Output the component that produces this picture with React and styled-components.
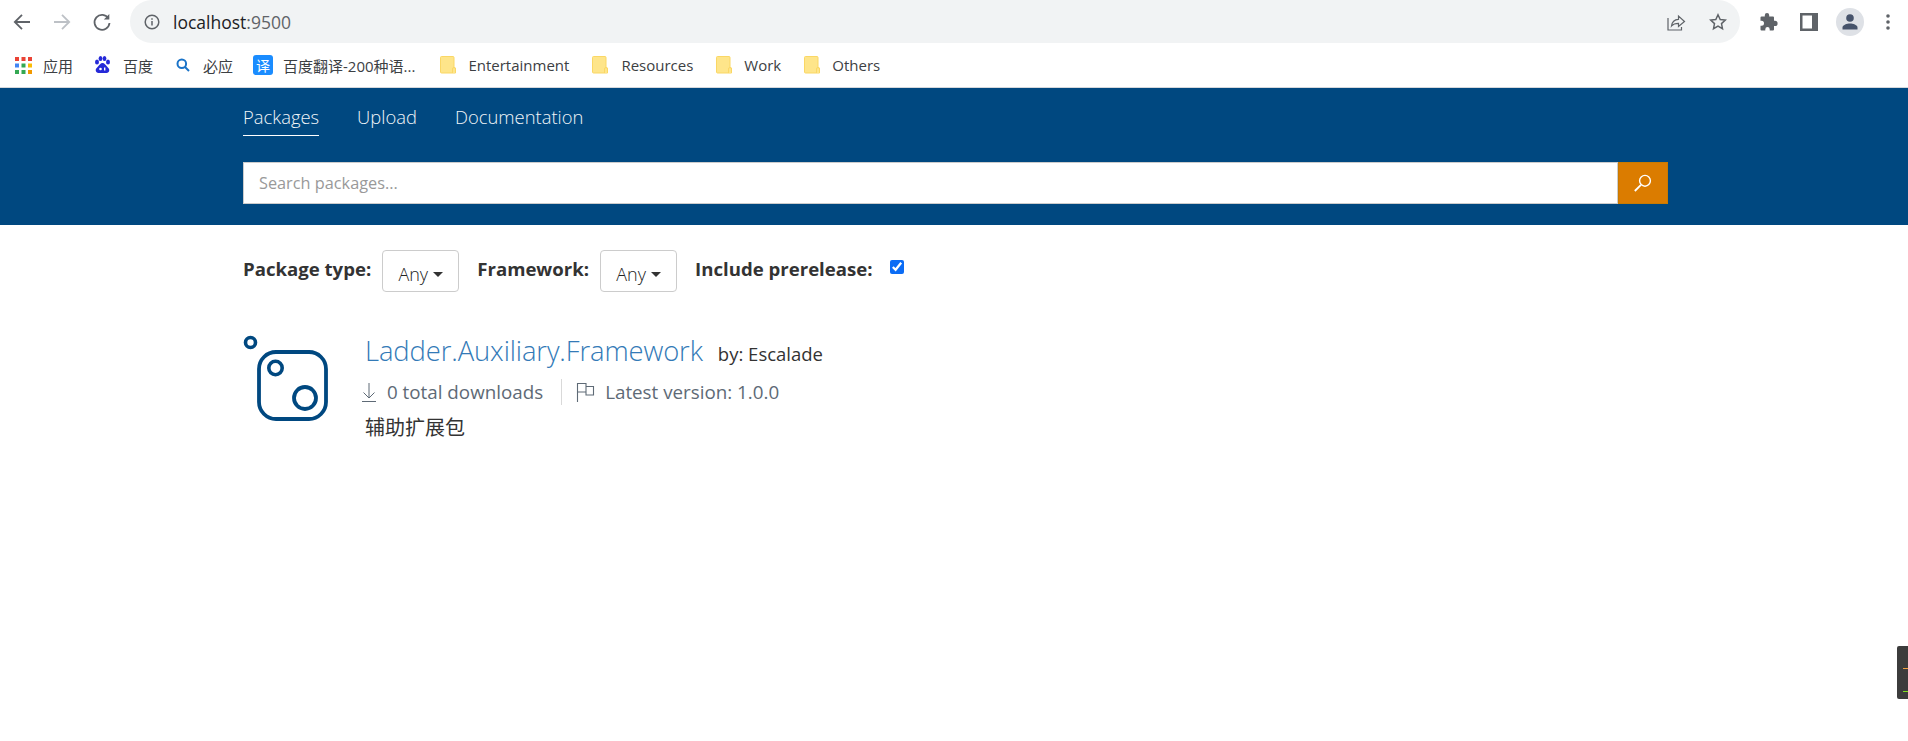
import React from 'react'
import styled, { createGlobalStyle } from 'styled-components'

const GlobalStyle = createGlobalStyle`
  html, body { margin: 0; padding: 0; background: #fff; overflow: hidden; }
  body { font-family: "Open Sans", "Noto Sans CJK SC", sans-serif; color: #333; }
`

const bookmarks = [
  { label: '应用', kind: 'apps', gap: 11, after: 21 },
  { label: '百度', kind: 'baidu', gap: 12, after: 23 },
  { label: '必应', kind: 'bing', gap: 13, after: 20 },
  { label: '百度翻译-200种语...', kind: 'translate', gap: 10, after: 25 },
  { label: 'Entertainment', kind: 'folder', gap: 12, after: 23 },
  { label: 'Resources', kind: 'folder', gap: 13, after: 23 },
  { label: 'Work', kind: 'folder', gap: 12, after: 23 },
  { label: 'Others', kind: 'folder', gap: 12, after: 0 },
]

function BookmarkIcon({ kind }) {
  if (kind === 'apps') {
    const colors = ['#ea4335', '#ea4335', '#ea4335', '#4285f4', '#34a853', '#fbbc05', '#34a853', '#34a853', '#f29900']
    return (
      <IconSvg width="17" height="17" viewBox="0 0 17 17">
        {colors.map((c, i) => (
          <rect key={i} x={(i % 3) * 6.500} y={Math.floor(i / 3) * 6.500} width="4" height="4" fill={c} />
        ))}
      </IconSvg>
    )
  }
  if (kind === 'baidu') {
    return (
      <IconSvg width="17" height="18" viewBox="0 0 17 18" fill="#2529d8">
        <ellipse cx="3" cy="6" rx="2" ry="2.6" />
        <ellipse cx="6.5" cy="2.6" rx="1.9" ry="2.5" />
        <ellipse cx="10.5" cy="2.6" rx="1.9" ry="2.5" />
        <ellipse cx="14" cy="6" rx="2" ry="2.6" />
        <path d="M8.5 7c-2 0-3 2-4.500 3.500C2.500 12 1 13.500 2 15.500c1 2 3.500 1.500 6.500 1.500s5.500.5 6.500-1.500c1-2-.5-3.500-2-5C11.500 9 10.500 7 8.500 7z" />
        <circle cx="6.500" cy="13" r="1.300" fill="#fff" />
        <rect x="10" y="11.500" width="1.400" height="3" fill="#fff" />
      </IconSvg>
    )
  }
  if (kind === 'bing') {
    return (
      <IconSvg width="14" height="14" viewBox="0 0 14 14" fill="none" stroke="#1a73c8" strokeWidth="2">
        <circle cx="5.800" cy="5.800" r="4.300" />
        <path d="M9 9l4 4" />
      </IconSvg>
    )
  }
  if (kind === 'translate') {
    return <TranslateBadge>译</TranslateBadge>
  }
  return (
    <IconSvg width="16" height="18" viewBox="0 0 16 18">
      <path d="M1.500.500h11.500a1 1 0 0 1 1 1V12h1.500v5H1.500a1 1 0 0 1-1-1V1.500a1 1 0 0 1 1-1z" fill="#fee58a" stroke="#fad765" />
      <path d="M12.500 17v-4a1 1 0 0 1 3 0v4" fill="#fee58a" stroke="#fad765" />
    </IconSvg>
  )
}

export default function App() {
  return (
    <>
      <GlobalStyle />
      <Page>
        <BrowserBar>
          <NavButton>
            <svg width="20" height="20" viewBox="0 0 20 20" fill="none" stroke="#5f6368" strokeWidth="1.800">
              <path d="M18 10H3M10 2.800L2.800 10l7.200 7.200" />
            </svg>
          </NavButton>
          <NavButton>
            <svg width="20" height="20" viewBox="0 0 20 20" fill="none" stroke="#bdc1c6" strokeWidth="1.800">
              <path d="M2 10h15M10 2.800l7.200 7.200-7.200 7.200" />
            </svg>
          </NavButton>
          <NavButton>
            <svg width="20" height="20" viewBox="0 0 20 20" fill="none" stroke="#5f6368" strokeWidth="1.800">
              <path d="M16.500 6.500A7.500 7.500 0 1 0 17.500 11" />
              <path d="M17.300 2v5.500h-5.500" fill="#5f6368" stroke="none" />
            </svg>
          </NavButton>
          <AddressBar>
            <svg width="16" height="16" viewBox="0 0 16 16" fill="none" stroke="#5f6368" strokeWidth="1.500">
              <circle cx="8" cy="8" r="6.800" />
              <path d="M8 7v4.500M8 4.300v1.500" />
            </svg>
            <Url>localhost<span>:9500</span></Url>
            <AddressActions>
              <svg width="19" height="18" viewBox="0 0 19 18" fill="none" stroke="#5f6368" strokeWidth="1.200">
                <path d="M1 5v12h13.500v-3" />
                <path d="M4.500 13c.5-4 3-6.500 7-6.700V3l6 5.500-6 5v-3.200c-3 0-5.500.8-7 2.700z" />
              </svg>
              <svg width="18" height="18" viewBox="0 0 18 18" fill="none" stroke="#5f6368" strokeWidth="1.500">
                <path d="M9 1.800l2.200 4.700 5.100.6-3.800 3.500 1 5.100L9 13.200l-4.500 2.500 1-5.100L1.700 7.100l5.100-.6z" />
              </svg>
            </AddressActions>
          </AddressBar>
          <ToolbarIcons>
            <svg width="18" height="18" viewBox="0 0 18 18" fill="#5f6368">
              <path d="M7 0a2.200 2.200 0 0 1 2.200 2.200V3.500H13a1 1 0 0 1 1 1v3.300h1a2.600 2.600 0 0 1 0 5.200h-1v3.500a1 1 0 0 1-1 1H9.700v-1.300a2.200 2.200 0 0 0-4.400 0V17.500H1.500a1 1 0 0 1-1-1v-3.700h1a2.500 2.500 0 0 0 0-5h-1V4.500a1 1 0 0 1 1-1h3.300V2.200A2.200 2.200 0 0 1 7 0z" />
            </svg>
            <svg width="18" height="18" viewBox="0 0 18 18" fill="none" stroke="#5f6368" strokeWidth="2.500">
              <rect x="1.250" y="1.250" width="15.500" height="15.500" />
              <rect x="12" y="2" width="4" height="14" fill="#5f6368" stroke="none" />
            </svg>
            <Avatar>
              <svg width="18" height="18" viewBox="0 0 18 18" fill="#46536b">
                <circle cx="9" cy="5" r="3.800" />
                <path d="M1.500 16.500v-2C1.500 12 6 10.500 9 10.500s7.500 1.500 7.500 4v2z" />
              </svg>
            </Avatar>
            <svg width="6" height="18" viewBox="0 0 6 18" fill="#5f6368">
              <circle cx="3" cy="3" r="1.800" />
              <circle cx="3" cy="9" r="1.800" />
              <circle cx="3" cy="15" r="1.800" />
            </svg>
          </ToolbarIcons>
        </BrowserBar>

        <BookmarkBar>
          {bookmarks.map((b) => (
            <Bookmark key={b.label} $gap={b.gap} $after={b.after}>
              <BookmarkIcon kind={b.kind} />
              <span>{b.label}</span>
            </Bookmark>
          ))}
        </BookmarkBar>

        <Header>
          <Container>
            <Nav>
              <NavLink $active>Packages</NavLink>
              <NavLink>Upload</NavLink>
              <NavLink>Documentation</NavLink>
            </Nav>
            <SearchRow>
              <SearchInput placeholder="Search packages..." readOnly />
              <SearchButton aria-label="Search">
                <svg width="20" height="20" viewBox="0 0 20 20" fill="none" stroke="#fff" strokeWidth="1.400">
                  <circle cx="12" cy="7.800" r="5.400" />
                  <path d="M8 11.800L1.800 18" strokeWidth="1.800" />
                </svg>
              </SearchButton>
            </SearchRow>
          </Container>
        </Header>

        <Container>
          <Filters>
            <FilterLabel>Package type:</FilterLabel>
            <Dropdown>Any<Caret /></Dropdown>
            <FilterLabel $left={18}>Framework:</FilterLabel>
            <Dropdown>Any<Caret /></Dropdown>
            <FilterLabel $left={18}>Include prerelease:</FilterLabel>
            <PrereleaseCheck type="checkbox" defaultChecked />
          </Filters>

          <PackageRow>
            <PackageIcon viewBox="0 0 86 86" fill="none" stroke="#004880">
              <circle cx="7.500" cy="7.500" r="5" strokeWidth="3.600" />
              <rect x="16" y="17" width="67" height="67" rx="17" strokeWidth="3.800" />
              <circle cx="32.500" cy="33" r="6.700" strokeWidth="3.600" />
              <circle cx="62" cy="63" r="11" strokeWidth="3.800" />
            </PackageIcon>
            <PackageBody>
              <TitleLine>
                <PackageTitle>Ladder.Auxiliary.Framework</PackageTitle>
                <Author>by: Escalade</Author>
              </TitleLine>
              <Stats>
                <Stat>
                  <svg width="16" height="22" viewBox="0 0 16 22" fill="none" stroke="#5e6a76" strokeWidth="1">
                    <path d="M8 2v15M2.500 11.500L8 17l5.500-5.500M1 20.500h14" />
                  </svg>
                  <span>0 total downloads</span>
                </Stat>
                <StatDivider />
                <Stat>
                  <svg width="19" height="22" viewBox="0 0 19 22" fill="none" stroke="#5e6a76" strokeWidth="1.100">
                    <path d="M1.500 21V2.500h8.500v3h7.500v8.500h-7.500V5.500M10 11H1.500" />
                  </svg>
                  <span>Latest version: 1.0.0</span>
                </Stat>
              </Stats>
              <Summary>辅助扩展包</Summary>
            </PackageBody>
          </PackageRow>
        </Container>

        <EdgeWidget>
          <i />
          <i />
        </EdgeWidget>
      </Page>
    </>
  )
}

const Page = styled.div`
  position: relative;
  width: 1908px;
  height: 741px;
  overflow: hidden;
  background: #fff;
`

const BrowserBar = styled.div`
  display: flex;
  align-items: center;
  height: 43px;
  padding-left: 12px;
`

const NavButton = styled.div`
  display: flex;
  justify-content: center;
  width: 20px;
  margin-right: 20px;
  &:nth-child(3) { margin-right: 18px; }
`

const AddressBar = styled.div`
  display: flex;
  align-items: center;
  flex: none;
  width: 1610px;
  height: 43px;
  padding: 0 13px 0 14px;
  box-sizing: border-box;
  background: #f1f3f4;
  border-radius: 22px;
`

const Url = styled.div`
  margin-left: 13px;
  font-size: 17.500px;
  color: #202124;
  span { color: #5f6368; }
`

const AddressActions = styled.div`
  display: flex;
  align-items: center;
  gap: 23px;
  margin-left: auto;
`

const ToolbarIcons = styled.div`
  display: flex;
  align-items: center;
  margin-left: 20px;
  gap: 22px;
`

const Avatar = styled.div`
  display: flex;
  align-items: center;
  justify-content: center;
  width: 28px;
  height: 28px;
  margin: 0 -1px 0 -4px;
  border-radius: 50%;
  background: #dee1e6;
`

const BookmarkBar = styled.div`
  display: flex;
  align-items: center;
  height: 45px;
  padding-left: 15px;
  box-sizing: border-box;
  border-bottom: 1px solid #d5d8dc;
`

const Bookmark = styled.div`
  display: flex;
  align-items: center;
  flex: none;
  gap: ${(p) => p.$gap}px;
  margin-right: ${(p) => p.$after}px;
  font-size: 15px;
  color: #3c4043;
  white-space: nowrap;
`

const IconSvg = styled.svg`
  flex: none;
`

const TranslateBadge = styled.div`
  display: flex;
  align-items: center;
  justify-content: center;
  flex: none;
  width: 20px;
  height: 20px;
  border-radius: 3px;
  background: #1a8cff;
  color: #fff;
  font-size: 14px;
`

const Header = styled.header`
  height: 137px;
  background: #004880;
`

const Container = styled.div`
  width: 1425px;
  margin-left: 243px;
`

const Nav = styled.nav`
  display: flex;
  gap: 38px;
  height: 74px;
  padding-top: 16px;
  box-sizing: border-box;
`

const NavLink = styled.a`
  height: 32px;
  font-weight: 300;
  font-size: 18.400px;
  line-height: 25px;
  color: #f0f5f8;
  box-sizing: border-box;
  border-bottom: ${(p) => (p.$active ? '1px solid #fff' : 'none')};
`

const SearchRow = styled.div`
  display: flex;
  height: 42px;
`

const SearchInput = styled.input`
  flex: 1;
  min-width: 0;
  padding: 0 15px;
  border: 1px solid #ccc;
  outline: none;
  font-family: "Open Sans", sans-serif;
  font-size: 16.300px;
  color: #555;
  &::placeholder { color: #999; opacity: 1; }
`

const SearchButton = styled.button`
  display: flex;
  align-items: center;
  justify-content: center;
  flex: none;
  width: 50px;
  padding: 0;
  border: 1px solid #c97a00;
  background: #db7c00;
`

const Filters = styled.div`
  display: flex;
  align-items: flex-start;
  padding-top: 25px;
  height: 110px;
  box-sizing: border-box;
`

const FilterLabel = styled.label`
  margin: 7px 11px 0 ${(p) => p.$left || 0}px;
  font-weight: 700;
  font-size: 18.600px;
  line-height: 24px;
  color: #333;
`

const Dropdown = styled.div`
  display: flex;
  align-items: center;
  justify-content: center;
  gap: 5px;
  width: 77px;
  height: 42px;
  padding-top: 6px;
  box-sizing: border-box;
  border: 1px solid #ccc;
  border-radius: 4px;
  font-weight: 300;
  font-size: 18px;
  color: #222;
`

const Caret = styled.span`
  width: 0;
  height: 0;
  border-top: 5px solid #333;
  border-left: 5px solid transparent;
  border-right: 5px solid transparent;
`

const PrereleaseCheck = styled.input`
  width: 14px;
  height: 14px;
  margin: 10px 0 0 6px;
  accent-color: #0b6cf5;
`

const PackageRow = styled.div`
  display: flex;
  align-items: flex-start;
`

const PackageIcon = styled.svg`
  flex: none;
  width: 86px;
  height: 86px;
`

const PackageBody = styled.div`
  margin-left: 36px;
  margin-top: -4px;
`

const TitleLine = styled.div`
  display: flex;
  align-items: baseline;
  gap: 15px;
`

const PackageTitle = styled.a`
  font-weight: 300;
  font-size: 27.400px;
  line-height: 40px;
  letter-spacing: -0.1px;
  color: #337ab7;
`

const Author = styled.span`
  font-size: 18.500px;
  color: #333;
`

const Stats = styled.div`
  display: flex;
  align-items: center;
  height: 26px;
  margin: 8px 0 0 -4px;
`

const Stat = styled.div`
  display: flex;
  align-items: center;
  gap: 10px;
  font-size: 18.800px;
  color: #5e6a76;
`

const StatDivider = styled.div`
  width: 1px;
  height: 26px;
  margin: 0 14px 0 18px;
  background: #d9d9d9;
`

const Summary = styled.p`
  margin: 10px 0 0;
  font-family: "Noto Sans CJK SC", sans-serif;
  font-size: 20px;
  line-height: 24px;
  color: #333;
`

const EdgeWidget = styled.div`
  position: absolute;
  left: 1897px;
  top: 646px;
  width: 11px;
  height: 53px;
  box-sizing: border-box;
  padding: 22px 0 0 6px;
  border-radius: 2px 0 0 2px;
  background: #3c3c3c;
  i {
    display: block;
    height: 1px;
    background: #f0a040;
    margin-bottom: 22px;
  }
  i + i { background: #80e020; }
`
